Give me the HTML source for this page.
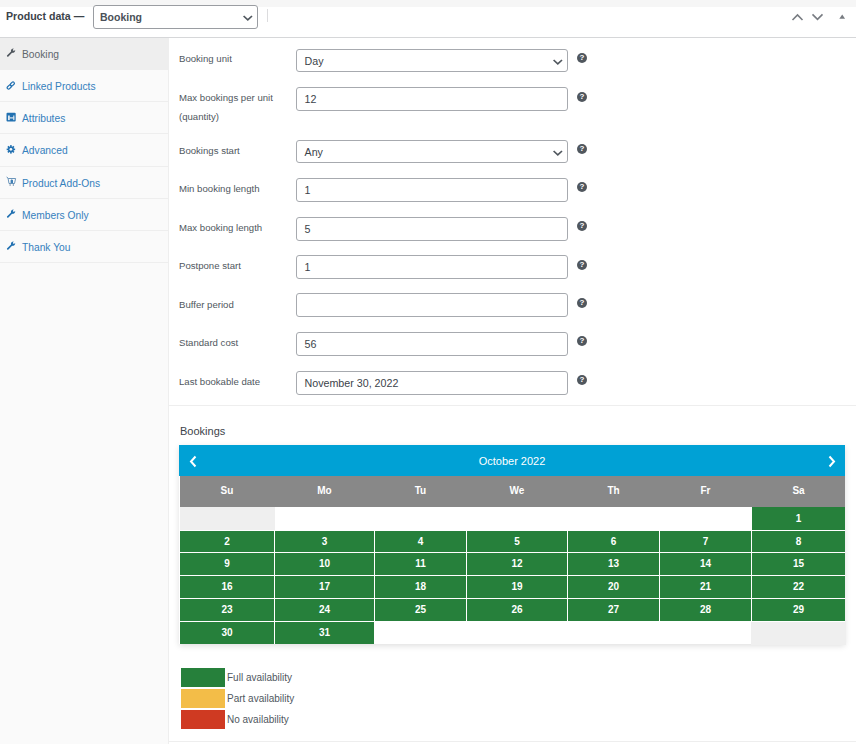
<!DOCTYPE html>
<html><head><meta charset="utf-8">
<style>
*{box-sizing:border-box;margin:0;padding:0}
html,body{width:856px;height:744px;overflow:hidden;background:#fff;font-family:"Liberation Sans",sans-serif;color:#3c434a}
.topstrip{position:absolute;left:0;top:0;width:856px;height:7px;background:#f6f6f6}
.hdr{position:absolute;left:0;top:7px;width:856px;height:31px;background:#fff;border-bottom:1px solid #d6d7d9}
.hdr .t{position:absolute;left:6px;top:3px;font-size:10.6px;font-weight:bold;color:#3c434a}
.vsep{position:absolute;left:267px;top:9px;width:1px;height:13px;background:#dcdcde}
.sel{position:absolute;border:1px solid #9a9da2;border-radius:3px;background:#fff}
.sel .v{position:absolute;left:7px;font-size:10.5px}
.chev{position:absolute;width:6px;height:6px;border-right:1.5px solid #50575e;border-bottom:1.5px solid #50575e;transform:rotate(45deg)}
.side{position:absolute;left:0;top:38px;width:169px;height:706px;background:#fafafa;border-right:1px solid #eee}
.side .it{position:absolute;left:0;width:168px;height:32px;border-bottom:1px solid #eee;font-size:10.25px;color:#3580bd}
.side .it span{position:absolute;left:22px;top:11px}
.side .ic{position:absolute;left:6px;top:10px}
.side .it.act{background:#eee;color:#5f666d}
.lbl{position:absolute;left:179px;font-size:9.6px;color:#50575e}
.inp{position:absolute;left:296px;width:272px;height:24px;border:1px solid #a7aaaf;border-radius:3px;background:#fff}
.inp .v{position:absolute;left:7.5px;top:5px;font-size:10.7px;color:#3c434a}
.help{position:absolute;left:577px;width:10px;height:10px;border-radius:50%;background:#50575e;color:#fff;font-size:8px;font-weight:bold;text-align:center;line-height:10px}

.sep{position:absolute;left:169px;top:405px;width:687px;height:1px;background:#eee}
.bt{position:absolute;left:180px;top:425px;font-size:11px;color:#3c434a}
.calwrap{position:absolute;left:179px;top:445px;width:666px;height:199px;box-shadow:0 2px 6px rgba(0,0,0,.13);background:#fff}
.calh{position:absolute;left:179px;top:445px;width:666px;height:31px;background:#00a1d5;color:#fff;font-size:11px;text-align:center;line-height:33px}
.wkr{position:absolute;left:180px;top:476px;width:665px;height:31px;background:#888}
.wd{position:absolute;top:476px;height:31px;line-height:30px;text-align:center;color:#fff;font-weight:bold;font-size:10px}
.cd{position:absolute;background:#26803b;color:#fff;text-align:center;font-size:10px;font-weight:bold}
.cg{position:absolute;background:#efefef}
.lg{position:absolute;left:181px;width:44px;height:19px}
.lt{position:absolute;left:227px;font-size:10px;color:#50575e;margin-top:1px}
.bl{position:absolute;left:169px;top:741px;width:687px;height:1px;background:#eee}
.hic{position:absolute;top:0}
</style></head><body>
<div class="topstrip"></div>
<div class="hdr">
  <div class="t">Product data —</div>
  <div class="sel" style="left:93px;top:-2px;width:165px;height:24px"><span class="v" style="top:5px;font-weight:bold;color:#4a5057;left:6px">Booking</span><svg style="position:absolute;left:147.5px;top:8px" width="12" height="8" viewBox="0 0 12 8"><path d="M1.6 2 L5.8 5.9 L10 2" fill="none" stroke="#50575e" stroke-width="1.7"/></svg></div>
</div>
<div class="vsep"></div>
<div class="side">
  <div class="it act" style="top:0px;height:32px"><svg class="ic" style="top:9px" width="11" height="11" viewBox="0 0 11 11"><g transform="translate(0.4 0.6) scale(0.88)"><path d="M1.6 9.4 L6 5" stroke="#50575e" stroke-width="2" stroke-linecap="round"/><path d="M5.2 4.6 A2.9 2.9 0 0 1 8.3 1.0 L7.2 2.6 L8.4 3.8 L10 2.7 A2.9 2.9 0 0 1 6.4 5.8 Z" fill="#50575e"/></g></svg><span>Booking</span></div>
  <div class="it" style="top:32px;height:32px"><svg class="ic" width="11" height="11" viewBox="0 0 11 11"><g fill="none" stroke="#2271b1" stroke-width="1.2"><rect x="0.9" y="5.6" width="4.8" height="2.8" rx="1.4" transform="rotate(-45 3.3 7)"/><rect x="3.9" y="2.6" width="4.8" height="2.8" rx="1.4" transform="rotate(-45 6.3 4)"/></g></svg><span>Linked Products</span></div>
  <div class="it" style="top:64px;height:32px"><svg class="ic" width="11" height="11" viewBox="0 0 11 11"><rect x="0.5" y="0.8" width="9.2" height="8.8" rx="1" fill="#2271b1"/><rect x="2" y="3.5" width="1.8" height="4.6" fill="#dfe8f0"/><rect x="3.6" y="5.3" width="4.6" height="1.2" fill="#dfe8f0"/><rect x="7.2" y="3.5" width="1.2" height="4.6" fill="#dfe8f0"/></svg><span>Attributes</span></div>
  <div class="it" style="top:96px;height:33px"><svg class="ic" width="11" height="11" viewBox="0 0 11 11"><g transform="translate(0.4 0.4) scale(0.9)"><g fill="#2271b1"><circle cx="5" cy="5.5" r="3.3"/><rect x="4.1" y="0.8" width="1.8" height="9.4"/><rect x="0.3" y="4.6" width="9.4" height="1.8"/><rect x="4.1" y="0.8" width="1.8" height="9.4" transform="rotate(45 5 5.5)"/><rect x="4.1" y="0.8" width="1.8" height="9.4" transform="rotate(-45 5 5.5)"/></g><circle cx="5" cy="5.5" r="1.5" fill="#fafafa"/></g></svg><span>Advanced</span></div>
  <div class="it" style="top:129px;height:32px"><svg class="ic" style="top:9px" width="11" height="11" viewBox="0 0 11 11"><path d="M0.6 1 L2 2 L3 7.5 L8.5 7.5 L9.6 2.5 L2.3 2.5" fill="none" stroke="#5b8ab3" stroke-width="0.9"/><path d="M4.6 7 L4.6 4.2 L5.8 3.2 L7 4.2 L7 7 Z" fill="#3f7fb6"/><rect x="3.5" y="8.3" width="1.2" height="1.4" fill="#6a8aa8"/><rect x="6.8" y="8.3" width="1.2" height="1.4" fill="#6a8aa8"/></svg><span>Product Add-Ons</span></div>
  <div class="it" style="top:161px;height:32px"><svg class="ic" style="top:9px" width="11" height="11" viewBox="0 0 11 11"><g transform="translate(0.4 0.6) scale(0.88)"><path d="M1.6 9.4 L6 5" stroke="#2271b1" stroke-width="2" stroke-linecap="round"/><path d="M5.2 4.6 A2.9 2.9 0 0 1 8.3 1.0 L7.2 2.6 L8.4 3.8 L10 2.7 A2.9 2.9 0 0 1 6.4 5.8 Z" fill="#2271b1"/></g></svg><span>Members Only</span></div>
  <div class="it" style="top:193px;height:32px"><svg class="ic" style="top:9px" width="11" height="11" viewBox="0 0 11 11"><g transform="translate(0.4 0.6) scale(0.88)"><path d="M1.6 9.4 L6 5" stroke="#2271b1" stroke-width="2" stroke-linecap="round"/><path d="M5.2 4.6 A2.9 2.9 0 0 1 8.3 1.0 L7.2 2.6 L8.4 3.8 L10 2.7 A2.9 2.9 0 0 1 6.4 5.8 Z" fill="#2271b1"/></g></svg><span>Thank You</span></div>
</div>

<div class="lbl" style="top:53px">Booking unit</div>
<div class="inp" style="top:49px;height:23px"><span class="v">Day</span><svg style="position:absolute;left:255px;top:8px" width="12" height="8" viewBox="0 0 12 8"><path d="M1.6 2 L5.8 5.9 L10 2" fill="none" stroke="#50575e" stroke-width="1.7"/></svg></div>
<div class="help" style="top:53px">?</div>

<div class="lbl" style="top:92px">Max bookings per unit</div>
<div class="lbl" style="top:111px">(quantity)</div>
<div class="inp" style="top:87px"><span class="v">12</span></div>
<div class="help" style="top:92px">?</div>

<div class="lbl" style="top:145px">Bookings start</div>
<div class="inp" style="top:140px;height:23px"><span class="v">Any</span><svg style="position:absolute;left:255px;top:8px" width="12" height="8" viewBox="0 0 12 8"><path d="M1.6 2 L5.8 5.9 L10 2" fill="none" stroke="#50575e" stroke-width="1.7"/></svg></div>
<div class="help" style="top:144px">?</div>

<div class="lbl" style="top:183px">Min booking length</div>
<div class="inp" style="top:178px"><span class="v">1</span></div>
<div class="help" style="top:182px">?</div>

<div class="lbl" style="top:222px">Max booking length</div>
<div class="inp" style="top:217px"><span class="v">5</span></div>
<div class="help" style="top:221px">?</div>

<div class="lbl" style="top:260px">Postpone start</div>
<div class="inp" style="top:255px"><span class="v">1</span></div>
<div class="help" style="top:260px">?</div>

<div class="lbl" style="top:299px">Buffer period</div>
<div class="inp" style="top:293px"></div>
<div class="help" style="top:298px">?</div>

<div class="lbl" style="top:337px">Standard cost</div>
<div class="inp" style="top:332px"><span class="v">56</span></div>
<div class="help" style="top:336px">?</div>

<div class="lbl" style="top:376px">Last bookable date</div>
<div class="inp" style="top:371px"><span class="v">November 30, 2022</span></div>
<div class="help" style="top:375px">?</div>


<div class="sep"></div>
<div class="bt">Bookings</div>
<div class="calwrap"></div>
<div class="calh">October 2022</div>
<svg style="position:absolute;left:188px;top:455px" width="10" height="13" viewBox="0 0 10 13"><path d="M7.5 1.5 L3 6.5 L7.5 11.5" fill="none" stroke="#fff" stroke-width="2"/></svg>
<svg style="position:absolute;left:826.7px;top:455px" width="10" height="13" viewBox="0 0 10 13"><path d="M2.5 1.5 L7 6.5 L2.5 11.5" fill="none" stroke="#fff" stroke-width="2"/></svg>
<div class="wkr"></div>
<div class="wd" style="left:180px;width:94px">Su</div>
<div class="wd" style="left:275px;width:99px">Mo</div>
<div class="wd" style="left:375px;width:91px">Tu</div>
<div class="wd" style="left:467px;width:100px">We</div>
<div class="wd" style="left:568px;width:91px">Th</div>
<div class="wd" style="left:660px;width:91px">Fr</div>
<div class="wd" style="left:752px;width:93px">Sa</div>
<div class="cg" style="left:180px;top:507px;width:95px;height:23px"></div>
<div class="cd" style="left:752px;top:507px;width:93px;height:23px;line-height:23px">1</div>
<div class="cd" style="left:180px;top:531px;width:94px;height:21px;line-height:21px">2</div>
<div class="cd" style="left:275px;top:531px;width:99px;height:21px;line-height:21px">3</div>
<div class="cd" style="left:375px;top:531px;width:91px;height:21px;line-height:21px">4</div>
<div class="cd" style="left:467px;top:531px;width:100px;height:21px;line-height:21px">5</div>
<div class="cd" style="left:568px;top:531px;width:91px;height:21px;line-height:21px">6</div>
<div class="cd" style="left:660px;top:531px;width:91px;height:21px;line-height:21px">7</div>
<div class="cd" style="left:752px;top:531px;width:93px;height:21px;line-height:21px">8</div>
<div class="cd" style="left:180px;top:553px;width:94px;height:22px;line-height:22px">9</div>
<div class="cd" style="left:275px;top:553px;width:99px;height:22px;line-height:22px">10</div>
<div class="cd" style="left:375px;top:553px;width:91px;height:22px;line-height:22px">11</div>
<div class="cd" style="left:467px;top:553px;width:100px;height:22px;line-height:22px">12</div>
<div class="cd" style="left:568px;top:553px;width:91px;height:22px;line-height:22px">13</div>
<div class="cd" style="left:660px;top:553px;width:91px;height:22px;line-height:22px">14</div>
<div class="cd" style="left:752px;top:553px;width:93px;height:22px;line-height:22px">15</div>
<div class="cd" style="left:180px;top:576px;width:94px;height:22px;line-height:22px">16</div>
<div class="cd" style="left:275px;top:576px;width:99px;height:22px;line-height:22px">17</div>
<div class="cd" style="left:375px;top:576px;width:91px;height:22px;line-height:22px">18</div>
<div class="cd" style="left:467px;top:576px;width:100px;height:22px;line-height:22px">19</div>
<div class="cd" style="left:568px;top:576px;width:91px;height:22px;line-height:22px">20</div>
<div class="cd" style="left:660px;top:576px;width:91px;height:22px;line-height:22px">21</div>
<div class="cd" style="left:752px;top:576px;width:93px;height:22px;line-height:22px">22</div>
<div class="cd" style="left:180px;top:599px;width:94px;height:22px;line-height:22px">23</div>
<div class="cd" style="left:275px;top:599px;width:99px;height:22px;line-height:22px">24</div>
<div class="cd" style="left:375px;top:599px;width:91px;height:22px;line-height:22px">25</div>
<div class="cd" style="left:467px;top:599px;width:100px;height:22px;line-height:22px">26</div>
<div class="cd" style="left:568px;top:599px;width:91px;height:22px;line-height:22px">27</div>
<div class="cd" style="left:660px;top:599px;width:91px;height:22px;line-height:22px">28</div>
<div class="cd" style="left:752px;top:599px;width:93px;height:22px;line-height:22px">29</div>
<div class="cd" style="left:180px;top:622px;width:94px;height:22px;line-height:22px">30</div>
<div class="cd" style="left:275px;top:622px;width:99px;height:22px;line-height:22px">31</div>
<div class="cg" style="left:751px;top:622px;width:95px;height:23px"></div>
<div class="lg" style="top:668px;background:#26803b"></div>
<div class="lg" style="top:689px;background:#f3bd48"></div>
<div class="lg" style="top:710px;background:#cf3a22"></div>
<div class="lt" style="top:671px">Full availability</div>
<div class="lt" style="top:692px">Part availability</div>
<div class="lt" style="top:713px">No availability</div>
<div class="bl"></div>
<svg style="position:absolute;left:790px;top:12px" width="60" height="11" viewBox="0 0 60 11"><path d="M2.5 8 L7.5 3 L12.5 8" fill="none" stroke="#787c82" stroke-width="1.6"/><path d="M22.5 2.4 L27.5 7.4 L32.5 2.4" fill="none" stroke="#787c82" stroke-width="1.6"/><path d="M49.3 6.8 L52.2 2.6 L55.1 6.8 Z" fill="#787c82"/></svg>
</body></html>
